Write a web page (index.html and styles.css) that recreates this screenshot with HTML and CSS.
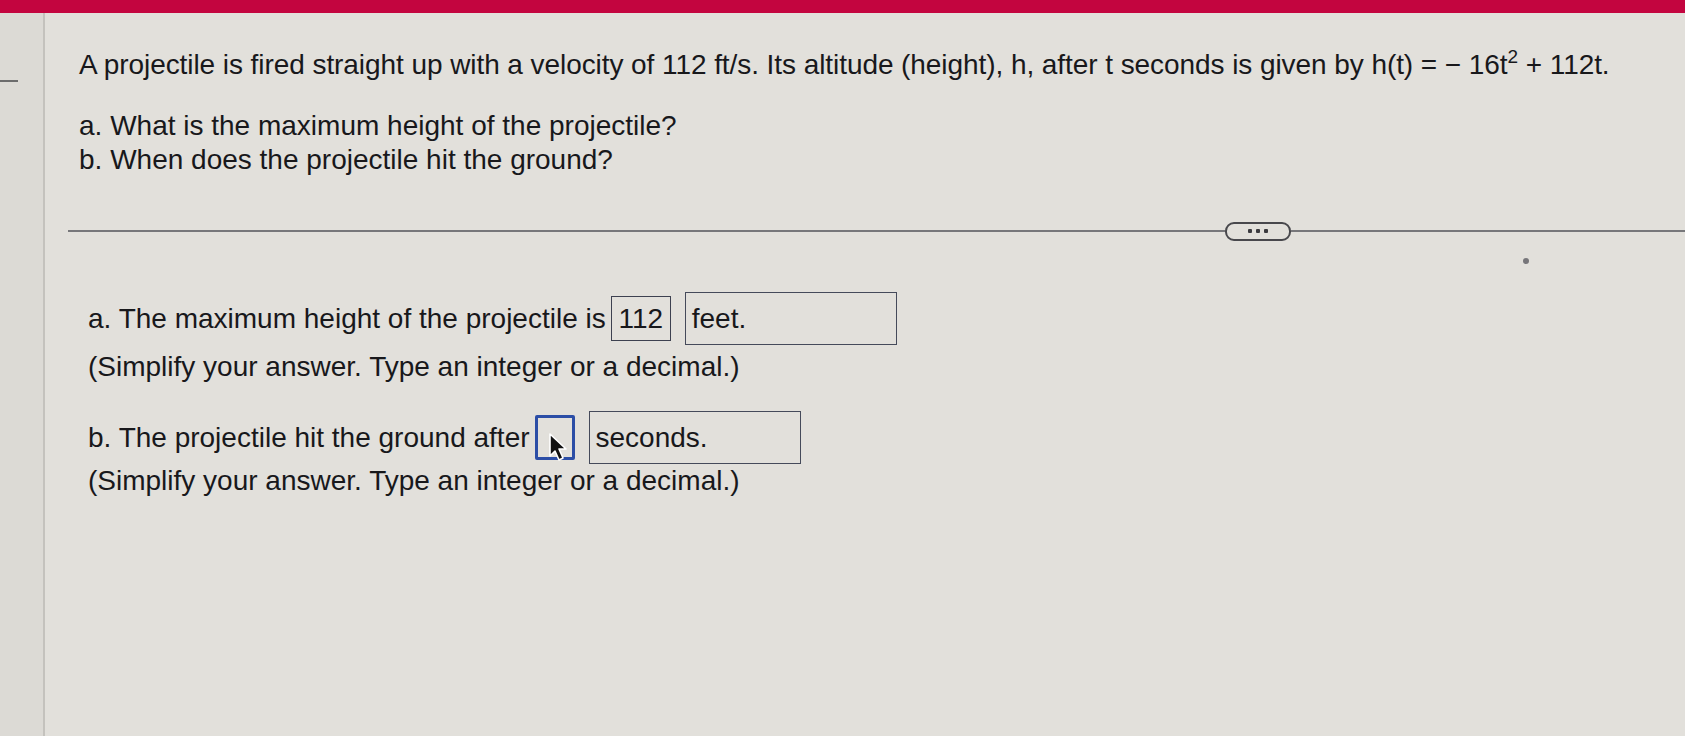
FILE: index.html
```html
<!DOCTYPE html>
<html>
<head>
<meta charset="utf-8">
<link rel="stylesheet" href="styles.css">
</head>
<body>
<div class="topbar"></div>
<div class="layout">
  <aside class="sidebar"><span class="dash"></span></aside>
  <main class="main">
    <section class="question">
      <p class="stem">A projectile is fired straight up with a velocity of 112 ft/s. Its altitude (height), h, after t seconds is given by h(t) = − 16t<sup>2</sup> + 112t.</p>
      <p class="part">a. What is the maximum height of the projectile?</p>
      <p class="part">b. When does the projectile hit the ground?</p>
    </section>
    <div class="divider">
      <span class="rule short"></span>
      <span class="pill"><i></i><i></i><i></i></span>
      <span class="rule"></span>
    </div>
    <section class="answers">
      <div class="ans-row row-a">
        <span>a. The maximum height of the projectile is</span>
        <span class="box filled">112</span>
        <span class="unit">feet.</span>
      </div>
      <p class="hint first">(Simplify your answer. Type an integer or a decimal.)</p>
      <div class="ans-row row-b">
        <span>b. The projectile hit the ground after</span>
        <span class="box active">
          <svg class="cursor" width="22" height="30" viewBox="0 0 22 30"><path d="M2 2 L2 24 L7 19 L11 28 L15 26 L11 17 L18 17 Z" fill="#111" stroke="#fff" stroke-width="1.6" stroke-linejoin="round"/></svg>
        </span>
        <span class="unit">seconds.</span>
      </div>
      <p class="hint last">(Simplify your answer. Type an integer or a decimal.)</p>
    </section>
    <span class="speck"></span>
  </main>
</div>
</body>
</html>
```
FILE: styles.css
```css
html, body {
  margin: 0;
  padding: 0;
}
body {
  width: 1685px;
  height: 736px;
  overflow: hidden;
  background: #dfddd8;
  font-family: "Liberation Sans", Arial, sans-serif;
  color: #18181b;
}
.topbar {
  height: 13px;
  background: #c3053f;
}
.layout {
  display: flex;
  height: 723px;
}
.sidebar {
  width: 43px;
  flex: none;
  border-right: 2px solid #c4c2bd;
  background: #dcdad5;
  position: relative;
}
.sidebar .dash {
  position: absolute;
  left: 0;
  top: 67px;
  width: 18px;
  height: 2px;
  background: #6c6c6c;
}
.main {
  flex: 1;
  position: relative;
  background: #e2e0db;
}
.question {
  padding: 36px 0 0 34px;
}
.stem {
  margin: 0;
  font-size: 28px;
  line-height: 32px;
  letter-spacing: -0.07px;
}
.stem sup {
  font-size: 19px;
  line-height: 0;
  vertical-align: 11px;
}
.part {
  margin: 0;
  font-size: 28px;
  line-height: 34px;
}
.stem + .part {
  margin-top: 28px;
}
.divider {
  display: flex;
  align-items: center;
  margin: 44px 0 0 23px;
  height: 20px;
}
.rule {
  flex: 1;
  height: 2px;
  background: #77777a;
}
.rule.short {
  flex: none;
  width: 1157px;
}
.pill {
  flex: none;
  width: 62px;
  height: 15px;
  border: 2px solid #48484c;
  border-radius: 9px;
  display: flex;
  align-items: center;
  justify-content: center;
  gap: 4px;
}
.pill i {
  width: 4px;
  height: 4px;
  background: #3b3b3f;
  border-radius: 1px;
}
.answers {
  padding: 51px 0 0 43px;
  font-size: 28px;
}
.ans-row {
  display: flex;
  align-items: center;
  height: 53px;
}
.row-b {
  margin-top: 28px;
}
.box {
  display: flex;
  align-items: center;
  justify-content: center;
  box-sizing: border-box;
  height: 45px;
  margin-left: 5px;
  position: relative;
}
.box.filled {
  width: 60px;
  border: 1.5px solid #3d4150;
}
.box.active {
  width: 40px;
  border: 3px solid #2c4ea6;
  border-radius: 2px;
}
.cursor {
  position: absolute;
  left: 10px;
  top: 14px;
}
.unit {
  box-sizing: border-box;
  width: 212px;
  height: 53px;
  margin-left: 14px;
  border: 1.5px solid #454a5a;
  padding: 0 6px;
  display: flex;
  align-items: center;
}
.hint {
  margin: 0;
  line-height: 33px;
}
.hint.first {
  margin-top: 5px;
}
.hint.last {
  margin-top: 0;
}
.speck {
  position: absolute;
  left: 1478px;
  top: 245px;
  width: 6px;
  height: 6px;
  border-radius: 50%;
  background: #77767a;
}
```
